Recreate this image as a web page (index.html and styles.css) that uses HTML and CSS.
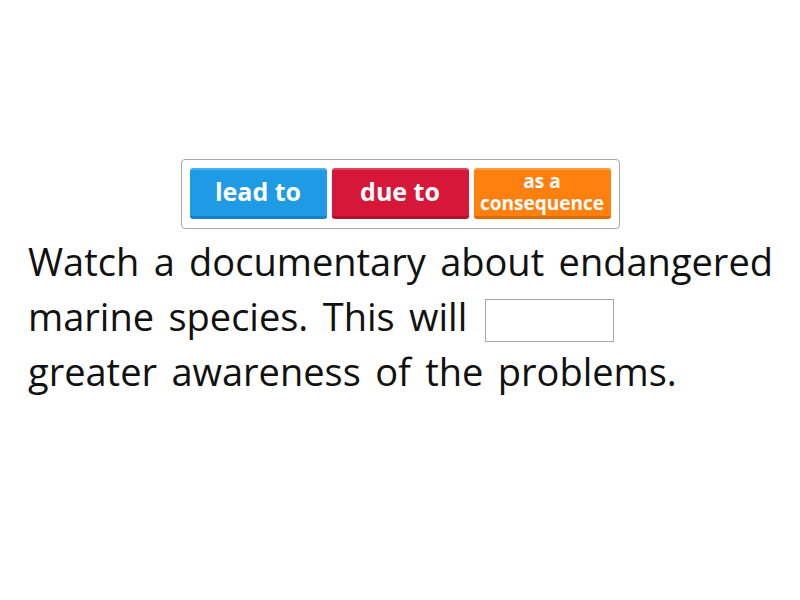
FILE: index.html
```html
<!DOCTYPE html>
<html>
<head>
<meta charset="utf-8">
<link rel="stylesheet" href="styles.css">
</head>
<body>
<div class="page">
  <div class="tray">
    <div class="tile tile-blue">lead to</div>
    <div class="tile tile-red">due to</div>
    <div class="tile tile-orange tile-small">as a<br>consequence</div>
  </div>
  <p class="sentence">Watch a documentary about endangered marine species. This will <span class="blank"></span><br>greater awareness of the problems.</p>
</div>
</body>
</html>
```
FILE: styles.css
```css
html, body {
  margin: 0;
  padding: 0;
  background: #fff;
}
.page {
  width: 800px;
  height: 600px;
  padding-top: 159px;
  box-sizing: border-box;
  font-family: "Open Sans", "DejaVu Sans", sans-serif;
}
.tray {
  width: 439px;
  margin: 0 auto;
  box-sizing: border-box;
  border: 1px solid #a9a9a9;
  border-radius: 4px;
  padding: 8px 8px 9px;
  display: flex;
  gap: 5px;
}
.tile {
  width: 137px;
  height: 51px;
  box-sizing: border-box;
  border-radius: 3px;
  color: #fff;
  font-weight: 700;
  font-size: 25px;
  line-height: 1;
  display: flex;
  align-items: center;
  justify-content: center;
  text-align: center;
  padding-bottom: 3px;
}
.tile-small {
  font-size: 19px;
  line-height: 22px;
  padding-bottom: 3px;
}
.tile-blue {
  background: #1f9be6;
  border-top: 2px solid #4bb0ee;
  border-bottom: 3px solid #1582c8;
}
.tile-red {
  background: #d6173a;
  border-top: 2px solid #e0455f;
  border-bottom: 3px solid #b3102d;
}
.tile-orange {
  background: #ff800f;
  border-top: 2px solid #ff9a3d;
  border-bottom: 3px solid #e06b02;
}
.sentence {
  margin: 5px 0 0 28px;
  width: 760px;
  font-size: 38px;
  line-height: 55px;
  word-spacing: 4.5px;
  color: #111;
}
.blank {
  display: inline-block;
  width: 129px;
  height: 43px;
  box-sizing: border-box;
  border: 1px solid #a6a6a6;
  vertical-align: -11px;
  margin: 0 3px;
}
```
